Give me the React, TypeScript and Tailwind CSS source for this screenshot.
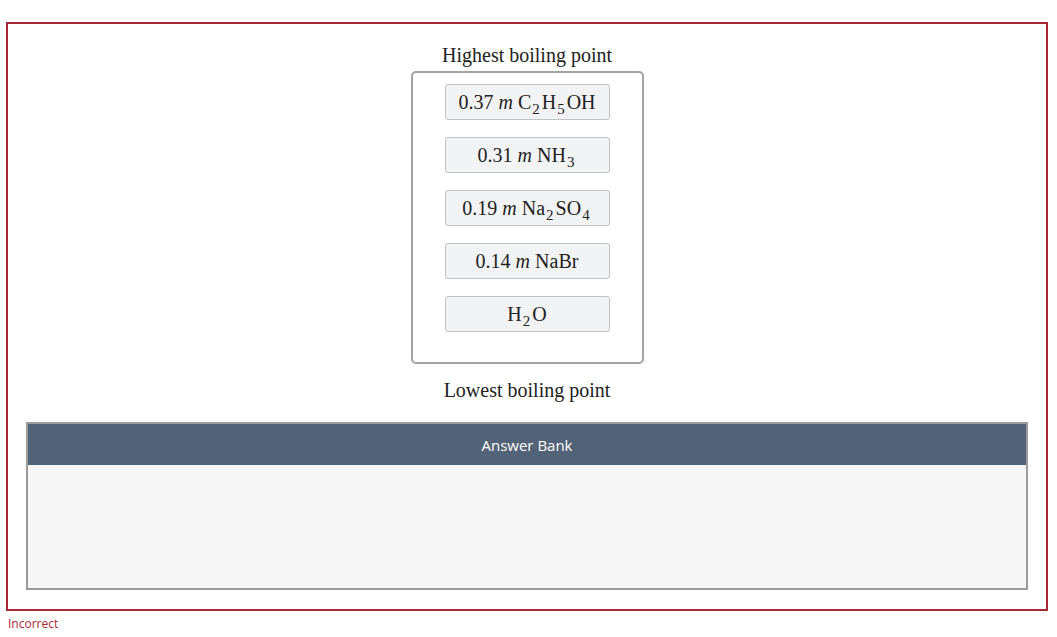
import type { ReactNode } from "react";

type Item = { id: string; label: ReactNode };

const Sub = ({ children }: { children: ReactNode }) => (
  <sub className="relative top-[0.32em] text-[0.75em] leading-none align-baseline ml-[1px] mr-[2px]">{children}</sub>
);

const items: Item[] = [
  {
    id: "etoh",
    label: (
      <>
        0.37 <i>m</i> C<Sub>2</Sub>H<Sub>5</Sub>OH
      </>
    ),
  },
  {
    id: "nh3",
    label: (
      <>
        0.31 <i>m</i> NH<Sub>3</Sub>
      </>
    ),
  },
  {
    id: "na2so4",
    label: (
      <>
        0.19 <i>m</i> Na<Sub>2</Sub>SO<Sub>4</Sub>
      </>
    ),
  },
  {
    id: "nabr",
    label: (
      <>
        0.14 <i>m</i> NaBr
      </>
    ),
  },
  {
    id: "h2o",
    label: (
      <>
        H<Sub>2</Sub>O
      </>
    ),
  },
];

const RankingList = () => (
  <div className="flex flex-col items-center font-['Liberation_Serif',serif] text-[20px] text-[#222]">
    <div className="leading-[22px] mb-[5px]">Highest boiling point</div>
    <div className="w-[233px] border-2 border-[#a3a3a3] rounded-[5px] pt-[11px] pb-[30px] flex flex-col items-center gap-[17px]">
      {items.map((item) => (
        <div
          key={item.id}
          className="w-[165px] h-[36px] bg-[#f2f3f5] border border-[#c2c2c2] rounded-[3px] flex items-center justify-center text-[20px] text-[#222]"
        >
          <span>{item.label}</span>
        </div>
      ))}
    </div>
    <div className="leading-[22px] mt-[15px]">Lowest boiling point</div>
  </div>
);

const AnswerBank = () => (
  <div className="border-2 border-[#9c9c9c] mx-[18px]">
    <div className="h-[41px] bg-[#536377] flex items-center justify-center text-white text-[15px] font-['Open_Sans',sans-serif] pt-[2px]">
      Answer Bank
    </div>
    <div className="h-[123px] bg-[#f7f7f7]"></div>
  </div>
);

export default function App() {
  return (
    <div className="bg-white w-[1057px] h-[637px] pt-[22px] pl-[6px] font-['Open_Sans',sans-serif]">
      <div className="w-[1042px] h-[589px] border-2 border-[#a72838] pt-[20px]">
        <RankingList />
        <div className="mt-[21px]">
          <AnswerBank />
        </div>
      </div>
      <div className="text-[12px] text-[#a72838] mt-[5px] ml-[2px] leading-[16px]">Incorrect</div>
    </div>
  );
}
